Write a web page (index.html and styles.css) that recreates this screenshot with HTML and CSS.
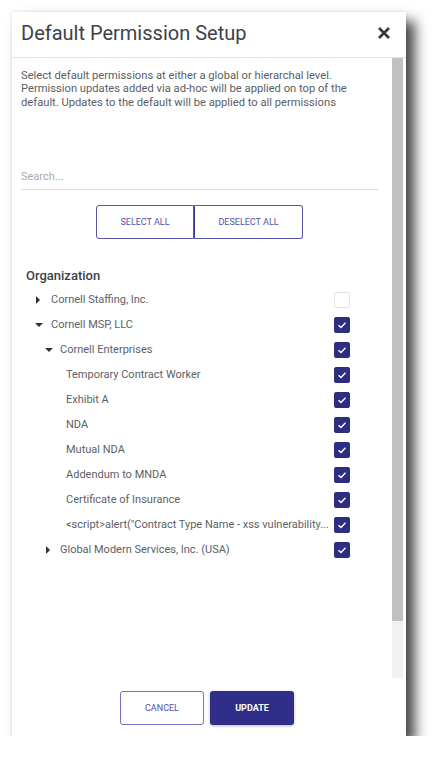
FILE: index.html
```html
<!DOCTYPE html>
<html lang="en">
<head>
<meta charset="utf-8">
<title>Default Permission Setup</title>
<link rel="stylesheet" href="styles.css">
</head>
<body>
<div class="page">
  <div class="dialog">
    <div class="header">
      <h1 class="title">Default Permission Setup</h1>
      <svg class="close" width="14" height="14" viewBox="0 0 14 14"><path d="M2 2 L12 12 M12 2 L2 12" stroke="#363a44" stroke-width="2.8" stroke-linecap="butt"/></svg>
    </div>
    <div class="body">
      <div class="content">
        <p class="desc">Select default permissions at either a global or hierarchal level. Permission updates added via ad-hoc will be applied on top of the default. Updates to the default will be applied to all permissions</p>
        <div class="search">Search...</div>
        <div class="btn-group">
          <div class="btn-outline first">SELECT ALL</div>
          <div class="btn-outline last">DESELECT ALL</div>
        </div>
        <div class="org-title">Organization</div>
        <div class="tree">
          <div class="row lvl0"><span class="caret right"></span><span class="label">Cornell Staffing, Inc.</span><span class="cb"></span></div>
          <div class="row lvl0"><span class="caret down"></span><span class="label">Cornell MSP, LLC</span><span class="cb on"><svg viewBox="0 0 16 16"><path d="M4.5 8.3 L7 10.5 L11.5 5.8" fill="none" stroke="#fff" stroke-width="1.4"/></svg></span></div>
          <div class="row lvl1"><span class="caret down"></span><span class="label">Cornell Enterprises</span><span class="cb on"><svg viewBox="0 0 16 16"><path d="M4.5 8.3 L7 10.5 L11.5 5.8" fill="none" stroke="#fff" stroke-width="1.4"/></svg></span></div>
          <div class="row leaf"><span class="label">Temporary Contract Worker</span><span class="cb on"><svg viewBox="0 0 16 16"><path d="M4.5 8.3 L7 10.5 L11.5 5.8" fill="none" stroke="#fff" stroke-width="1.4"/></svg></span></div>
          <div class="row leaf"><span class="label">Exhibit A</span><span class="cb on"><svg viewBox="0 0 16 16"><path d="M4.5 8.3 L7 10.5 L11.5 5.8" fill="none" stroke="#fff" stroke-width="1.4"/></svg></span></div>
          <div class="row leaf"><span class="label">NDA</span><span class="cb on"><svg viewBox="0 0 16 16"><path d="M4.5 8.3 L7 10.5 L11.5 5.8" fill="none" stroke="#fff" stroke-width="1.4"/></svg></span></div>
          <div class="row leaf"><span class="label">Mutual NDA</span><span class="cb on"><svg viewBox="0 0 16 16"><path d="M4.5 8.3 L7 10.5 L11.5 5.8" fill="none" stroke="#fff" stroke-width="1.4"/></svg></span></div>
          <div class="row leaf"><span class="label">Addendum to MNDA</span><span class="cb on"><svg viewBox="0 0 16 16"><path d="M4.5 8.3 L7 10.5 L11.5 5.8" fill="none" stroke="#fff" stroke-width="1.4"/></svg></span></div>
          <div class="row leaf"><span class="label">Certificate of Insurance</span><span class="cb on"><svg viewBox="0 0 16 16"><path d="M4.5 8.3 L7 10.5 L11.5 5.8" fill="none" stroke="#fff" stroke-width="1.4"/></svg></span></div>
          <div class="row leaf"><span class="label">&lt;script&gt;alert("Contract Type Name - xss vulnerability...</span><span class="cb on"><svg viewBox="0 0 16 16"><path d="M4.5 8.3 L7 10.5 L11.5 5.8" fill="none" stroke="#fff" stroke-width="1.4"/></svg></span></div>
          <div class="row lvl1"><span class="caret right"></span><span class="label">Global Modern Services, Inc. (USA)</span><span class="cb on"><svg viewBox="0 0 16 16"><path d="M4.5 8.3 L7 10.5 L11.5 5.8" fill="none" stroke="#fff" stroke-width="1.4"/></svg></span></div>
        </div>
      </div>
      <div class="scrollbar">
        <div class="thumb"></div>
        <div class="track"></div>
      </div>
    </div>
    <div class="footer">
      <div class="btn cancel">CANCEL</div>
      <div class="btn update">UPDATE</div>
    </div>
  </div>
</div>
</body>
</html>
```

FILE: styles.css
```css
* { box-sizing: border-box; }
html, body { margin: 0; padding: 0; background: #fff; }
body { font-family: Roboto, "Liberation Sans", sans-serif; }

.page { padding: 12px 0 0 12px; }

.dialog {
  width: 394px;
  height: 724px;
  background: #fff;
  display: flex;
  flex-direction: column;
  box-shadow: 9px 9px 12px rgba(0,0,0,0.72), 0 0 3px rgba(0,0,0,0.12);
}

.header {
  height: 46px;
  flex: none;
  border-bottom: 1px solid #e6e6e6;
  display: flex;
  align-items: center;
  justify-content: space-between;
  padding: 0 15px 0 9px;
}
.title {
  margin: 0;
  font-size: 20px;
  font-weight: 400;
  color: #3d414a;
  position: relative;
  top: -2px;
}
.close { position: relative; top: -2px; }

.body {
  flex: 1;
  display: flex;
  min-height: 0;
}
.content {
  flex: 1;
  padding: 11px 14px 0 9px;
  min-width: 0;
}
.desc {
  margin: 0;
  font-size: 11.2px;
  line-height: 13.4px;
  color: #5a5e66;
}
.search {
  margin-top: 57px;
  height: 24px;
  font-size: 11px;
  line-height: 22px;
  color: #a9a9a9;
  border-bottom: 1px solid #dedede;
}
.btn-group {
  margin-top: 15px;
  display: flex;
  justify-content: center;
}
.btn-outline {
  height: 34px;
  display: flex;
  align-items: center;
  justify-content: center;
  font-size: 9px;
  font-weight: 400;
  color: #5252a2;
  border: 1px solid #5656a8;
}
.btn-outline.first { width: 98px; border-radius: 3px 0 0 3px; }
.btn-outline.last { width: 109px; border-radius: 0 3px 3px 0; border-left: 1px solid #3a3a94; }

.org-title {
  margin-top: 29px;
  padding-left: 5px;
  font-size: 13px;
  line-height: 16px;
  font-weight: 500;
  color: #3e4148;
}
.tree { margin-top: 3px; }
.row {
  height: 25px;
  display: flex;
  align-items: center;
  padding-right: 28px;
}
.row.lvl0 { padding-left: 14px; }
.row.lvl1 { padding-left: 24px; }
.row.leaf { padding-left: 45px; }
.caret {
  flex: none;
  width: 16px;
  height: 8px;
  position: relative;
}
.row.lvl1 .caret { width: 15px; }
.caret::before {
  content: "";
  position: absolute;
  width: 0; height: 0;
}
.caret.right::before {
  left: 1px; top: 0;
  border-left: 4px solid #333;
  border-top: 4px solid transparent;
  border-bottom: 4px solid transparent;
}
.caret.down::before {
  left: 0; top: 2px;
  border-top: 4px solid #333;
  border-left: 4px solid transparent;
  border-right: 4px solid transparent;
}
.label {
  flex: 1;
  min-width: 0;
  font-size: 11px;
  color: #5c5f66;
  white-space: nowrap;
  overflow: hidden;
  text-overflow: ellipsis;
  margin-right: 3px;
}
.cb {
  flex: none;
  width: 16px;
  height: 16px;
  border-radius: 2px;
  border: 1px solid #e2e2e2;
  background: #fff;
}
.cb.on {
  background: #2d2d82;
  border-color: #2d2d82;
  display: flex;
  align-items: center;
  justify-content: center;
}
.cb.on svg { width: 16px; height: 16px; flex: none; }

.scrollbar {
  flex: none;
  width: 11px;
  margin-right: 3px;
  display: flex;
  flex-direction: column;
}
.thumb { height: 563px; background: #c1c1c1; }
.track { flex: 1; background: #f1f1f1; }

.footer {
  height: 58px;
  flex: none;
  display: flex;
  justify-content: center;
  gap: 6px;
  padding: 13px 4px 0 0;
}
.btn {
  width: 84px;
  height: 34px;
  border-radius: 3px;
  display: flex;
  align-items: center;
  justify-content: center;
  font-size: 9px;
  font-weight: 400;
}
.cancel { border: 1px solid #7272bf; color: #5252a2; }
.update {
  background: #2e2e88;
  color: #fff;
  font-weight: 700;
  box-shadow: 0 1px 3px rgba(40,40,120,0.35);
}
```
